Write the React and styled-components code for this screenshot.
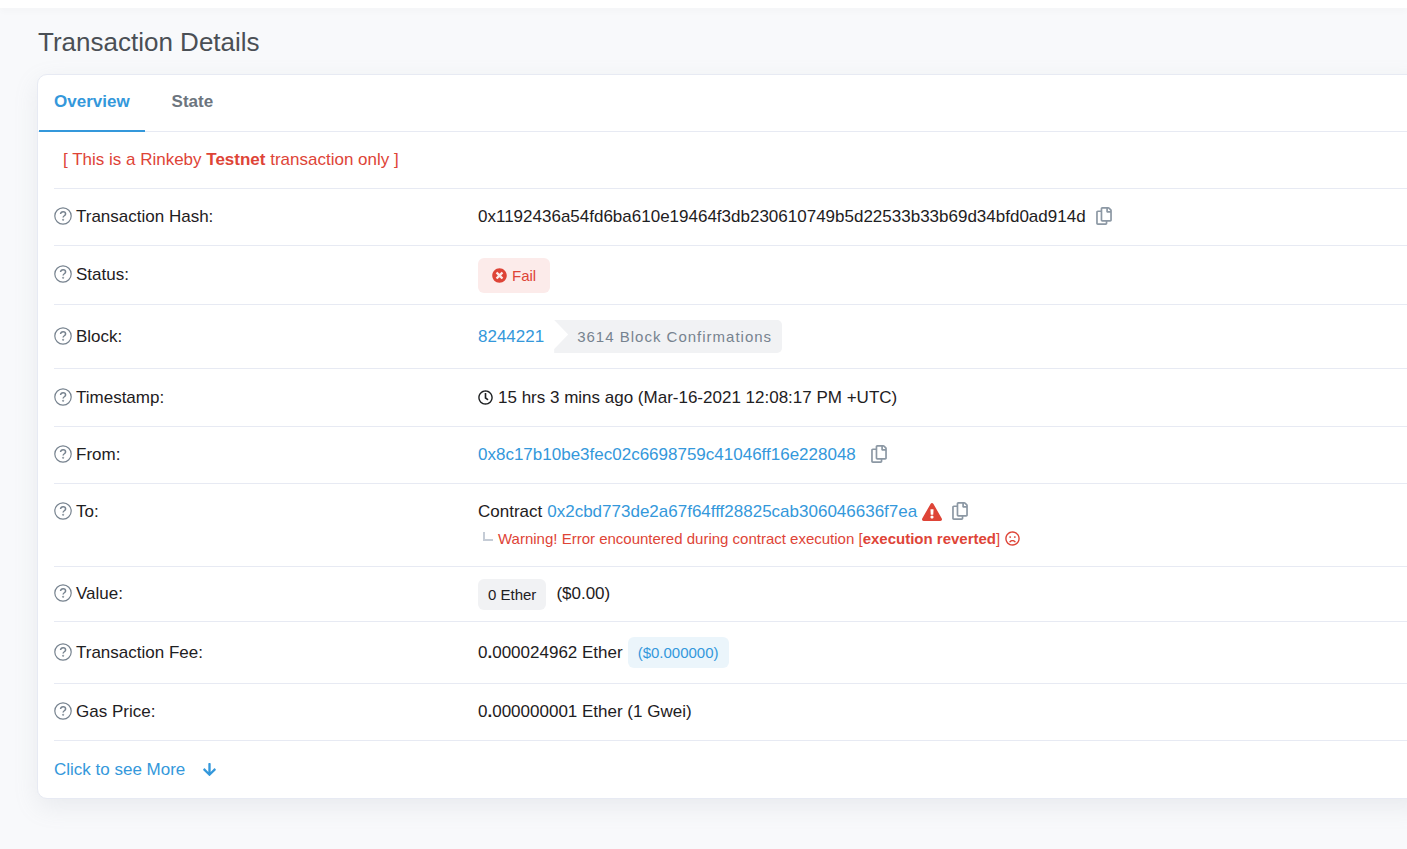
import React from 'react';
import styled, { createGlobalStyle, css } from 'styled-components';
import {
  FaArrowDown,
  FaExclamationTriangle,
  FaRegClock,
  FaRegCopy,
  FaRegFrown,
  FaTimesCircle,
} from 'react-icons/fa';

const colors = {
  page: '#f8f9fb',
  white: '#ffffff',
  border: '#e7eaf3',
  text: '#1e2022',
  title: '#4a4f55',
  muted: '#77838f',
  icon: '#8c98a4',
  blue: '#3498db',
  red: '#de4437',
};

const GlobalStyle = createGlobalStyle`
  * {
    box-sizing: border-box;
  }

  body {
    margin: 0;
    overflow-x: hidden;
    font-family: 'Liberation Sans', Arial, sans-serif;
    font-size: 17px;
    line-height: 26px;
    color: ${colors.text};
    background-color: ${colors.page};
  }
`;

const TopBar = styled.div`
  height: 8px;
  background-color: ${colors.white};
  box-shadow: 0 4px 6px rgba(0, 0, 0, 0.02);
`;

const Page = styled.main`
  padding: 14px 0 50px 37px;
`;

const Title = styled.h1`
  margin: 0 0 12px;
  padding-left: 1px;
  font-size: 26px;
  font-weight: 400;
  line-height: 40px;
  color: ${colors.title};
`;

const Card = styled.section`
  margin-right: -20px;
  background-color: ${colors.white};
  border: 1px solid ${colors.border};
  border-radius: 10px;
  box-shadow: 0 8px 24px rgba(140, 152, 164, 0.14);
`;

const Tabs = styled.nav`
  display: flex;
  gap: 12px;
  padding-left: 1px;
  border-bottom: 1px solid ${colors.border};
`;

const Tab = styled.button`
  height: 57px;
  margin-bottom: -1px;
  padding: 0 15px 2px;
  font: inherit;
  font-weight: 700;
  color: ${({ $active }) => ($active ? colors.blue : '#6c757e')};
  background: none;
  border: 0;
  border-bottom: 2px solid
    ${({ $active }) => ($active ? colors.blue : 'transparent')};
  cursor: pointer;
`;

const Body = styled.div`
  padding: 0 16px;
  margin-right: -16px;
`;

const Row = styled.div`
  display: flex;
  align-items: ${({ $top }) => ($top ? 'flex-start' : 'center')};
  min-height: ${({ $height = 57 }) => $height}px;
  padding: ${({ $top }) => ($top ? '15px 0 14px' : '0')};
  border-bottom: 1px solid ${colors.border};
`;

const Notice = styled(Row)`
  padding-left: 9px;
  color: ${colors.red};
`;

const Label = styled.div`
  display: flex;
  flex: 0 0 424px;
  align-items: center;
  gap: 4px;
`;

const HelpIcon = styled.svg`
  flex: none;
  width: 18px;
  height: 18px;
  margin-bottom: 2px;
  fill: none;
  stroke: ${colors.muted};
`;

const Value = styled.div`
  min-width: 0;
`;

const Line = styled.div`
  display: flex;
  align-items: center;
  gap: ${({ $gap = 5 }) => $gap}px;
  white-space: nowrap;
`;

const Anchor = styled.a`
  color: ${colors.blue};
  text-decoration: none;
`;

const IconButton = styled.button`
  display: inline-flex;
  padding: 0 0 2px;
  color: ${colors.icon};
  background: none;
  border: 0;
  cursor: pointer;
`;

const badges = {
  fail: css`
    padding: 5px 14px 4px;
    color: ${colors.red};
    background-color: #fcebea;
  `,
  gray: css`
    background-color: #f1f2f4;
  `,
  blue: css`
    color: ${colors.blue};
    background-color: #ebf5fb;
  `,
};

const Badge = styled.span`
  display: inline-flex;
  align-items: center;
  gap: 5px;
  padding: 3px 10px 2px;
  font-size: 15px;
  border-radius: 6px;
  ${({ $type }) => badges[$type]};
`;

const Confirmations = styled.span`
  padding: 4px 10px 3px 23px;
  font-size: 15px;
  letter-spacing: 1px;
  color: ${colors.muted};
  background-color: #f1f2f4;
  border-radius: 0 5px 5px 0;
  clip-path: polygon(0 0, 100% 0, 100% 100%, 0 100%, 0 88%, 14px 44%);
`;

const Warning = styled(Line)`
  padding-left: 5px;
  font-size: 15px;
  line-height: 27px;
  color: ${colors.red};
`;

const Elbow = styled.span`
  width: 10px;
  height: 9px;
  margin-bottom: 4px;
  border: solid #c5ccd6;
  border-width: 0 0 2px 2px;
`;

const More = styled.a`
  display: inline-flex;
  align-items: center;
  gap: 17px;
  height: 57px;
  color: ${colors.blue};
  text-decoration: none;
`;

const Help = () => (
  <HelpIcon viewBox="0 0 18 18" aria-hidden="true">
    <circle cx="9" cy="9" r="8.2" strokeWidth="1.2" />
    <path
      d="M6.5 7c.2-1.5 1.200-2.300 2.600-2.300 1.400 0 2.500.9 2.500 2.200 0 1.900-2.500 1.800-2.500 3.600"
      strokeWidth="1.5"
    />
    <circle cx="9.1" cy="12.800" r=".6" />
  </HelpIcon>
);

const Copy = () => (
  <IconButton type="button" aria-label="Copy">
    <FaRegCopy size={18} />
  </IconButton>
);

const Field = ({ label, height, top, children }) => (
  <Row $height={height} $top={top}>
    <Label>
      <Help />
      {label}:
    </Label>
    <Value>{children}</Value>
  </Row>
);

const App = () => (
  <>
    <GlobalStyle />
    <TopBar />
    <Page>
      <Title>Transaction Details</Title>
      <Card>
        <Tabs>
          <Tab type="button" $active>
            Overview
          </Tab>
          <Tab type="button">State</Tab>
        </Tabs>
        <Body>
          <Notice>
            <span>
              [ This is a Rinkeby <b>Testnet</b> transaction only ]
            </span>
          </Notice>
          <Field label="Transaction Hash">
            <Line $gap={9}>
              0x1192436a54fd6ba610e19464f3db230610749b5d22533b33b69d34bfd0ad914d
              <Copy />
            </Line>
          </Field>
          <Field label="Status" height={59}>
            <Line>
              <Badge $type="fail">
                <FaTimesCircle size={15} />
                Fail
              </Badge>
            </Line>
          </Field>
          <Field label="Block" height={64}>
            <Line $gap={10}>
              <Anchor href="#block">8244221</Anchor>
              <Confirmations>3614 Block Confirmations</Confirmations>
            </Line>
          </Field>
          <Field label="Timestamp" height={58}>
            <Line>
              <FaRegClock size={15} />
              15 hrs 3 mins ago (Mar-16-2021 12:08:17 PM +UTC)
            </Line>
          </Field>
          <Field label="From">
            <Line $gap={14}>
              <Anchor href="#from">
                0x8c17b10be3fec02c6698759c41046ff16e228048
              </Anchor>
              <Copy />
            </Line>
          </Field>
          <Field label="To" height={83} top>
            <Line>
              Contract
              <Anchor href="#to">
                0x2cbd773de2a67f64fff28825cab306046636f7ea
              </Anchor>
              <Line $gap={9}>
                <FaExclamationTriangle size={20} color={colors.red} />
                <Copy />
              </Line>
            </Line>
            <Warning>
              <Elbow />
              <span>
                Warning! Error encountered during contract execution [
                <b>execution reverted</b>]
              </span>
              <FaRegFrown size={15} />
            </Warning>
          </Field>
          <Field label="Value" height={55}>
            <Line $gap={10}>
              <Badge $type="gray">0 Ether</Badge>
              ($0.00)
            </Line>
          </Field>
          <Field label="Transaction Fee" height={62}>
            <Line>
              <span>
                0<b>.</b>000024962 Ether
              </span>
              <Badge $type="blue">($0.000000)</Badge>
            </Line>
          </Field>
          <Field label="Gas Price">
            <Line>
              <span>
                0<b>.</b>000000001 Ether (1 Gwei)
              </span>
            </Line>
          </Field>
          <More href="#more">
            Click to see More
            <FaArrowDown size={15} />
          </More>
        </Body>
      </Card>
    </Page>
  </>
);

export default App;
